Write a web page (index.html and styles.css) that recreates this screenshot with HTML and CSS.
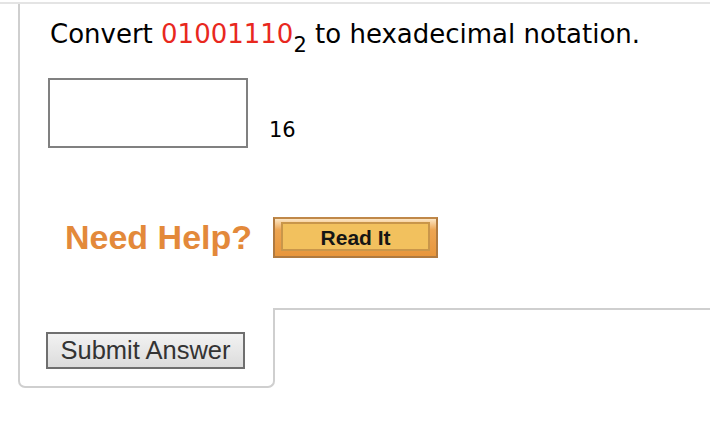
FILE: index.html
```html
<!DOCTYPE html>
<html lang="en">
<head>
    <meta charset="UTF-8">
    <title>Question</title>
    <link rel="stylesheet" href="styles.css">
</head>
<body>
    <div class="frame">
        <div class="question">
            <p class="prompt">Convert <span class="num">01001110</span><sub>2</sub> to hexadecimal notation.</p>

            <div class="answer-row">
                <input type="text" class="answer">
                <span class="base">16</span>
            </div>

            <div class="help-row">
                <span class="need-help">Need Help?</span>
                <button class="read-it"><span>Read It</span></button>
            </div>
        </div>

        <div class="footer">
            <div class="footer-left">
                <button class="submit">Submit Answer</button>
            </div>
            <div class="footer-right"></div>
        </div>
    </div>
</body>
</html>
```

FILE: styles.css
```css
body {
    margin: 0;
    padding-top: 2px;
    font-family: "DejaVu Sans", Verdana, sans-serif;
    background: #fff;
}
.frame {
    border-top: 2px solid #e4e4e4;
}
.question {
    margin-left: 18px;
    border-left: 2px solid #cfcfcf;
    padding: 14px 0 0 28px;
    height: 290px;
}
.prompt {
    margin: 0 0 0 2px;
    font-size: 26px;
    line-height: 32px;
    color: #000;
}
.num {
    color: #e8281e;
}
.prompt sub {
    font-size: 21px;
    line-height: 0;
    vertical-align: -0.45em;
}
.answer-row {
    display: flex;
    align-items: flex-end;
    margin-top: 28px;
}
.answer {
    width: 200px;
    height: 70px;
    box-sizing: border-box;
    border: 2px solid #808080;
    margin: 0;
    padding: 0;
}
.base {
    font-size: 21px;
    margin-left: 21px;
    margin-bottom: 6px;
}
.help-row {
    display: flex;
    align-items: center;
    margin-top: 69px;
    padding-left: 17px;
}
.need-help {
    font-family: "Liberation Sans", Arial, sans-serif;
    font-weight: bold;
    font-size: 34px;
    color: #e3893a;
    margin-right: 21px;
}
.read-it {
    width: 165px;
    height: 41px;
    padding: 3px 6px 5px;
    border: 2px solid #b07a40;
    border-top-color: #c08848;
    background: linear-gradient(#fce6c4, #eda552 30%, #e8963c);
    cursor: pointer;
    box-sizing: border-box;
}
.read-it span {
    display: block;
    height: 100%;
    box-sizing: border-box;
    border: 2px solid #c9964a;
    background: #f2c15e;
    font-family: "Liberation Sans", Arial, sans-serif;
    font-weight: bold;
    font-size: 21px;
    line-height: 27px;
    color: #151515;
}
.footer {
    display: flex;
    margin-left: 18px;
}
.footer-left {
    width: 257px;
    height: 80px;
    box-sizing: border-box;
    border: 2px solid #cfcfcf;
    border-top: none;
    border-radius: 0 0 7px 7px;
    padding: 24px 0 0 26px;
}
.footer-right {
    flex: 1;
    border-top: 2px solid #cfcfcf;
}
.submit {
    width: 199px;
    height: 37px;
    border: 2px solid #6f6f6f;
    background: linear-gradient(#f2f2f2, #dcdcdc);
    font-family: "Liberation Sans", Arial, sans-serif;
    font-size: 25.5px;
    color: #333;
    padding: 0;
    cursor: pointer;
}
```
